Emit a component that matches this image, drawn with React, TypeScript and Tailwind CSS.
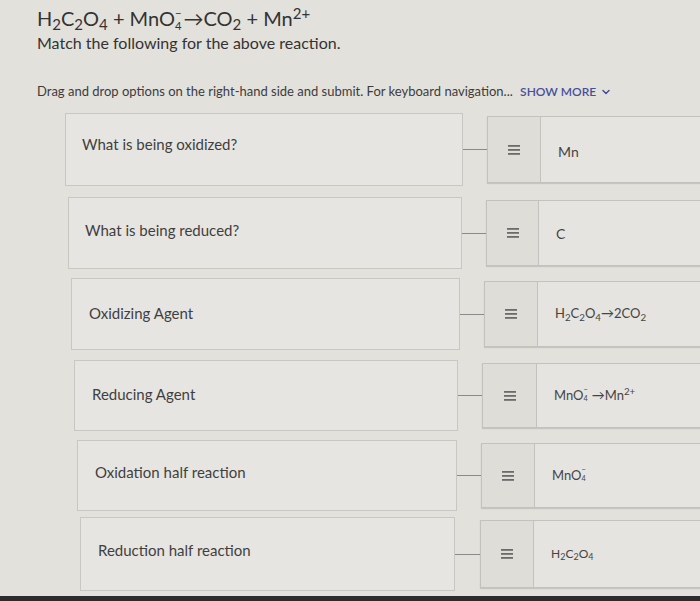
import { ChevronDown } from 'lucide-react';
import type { ReactNode } from 'react';

// sub and sup stacked on one another, as in MnO4⁻
function Stack({ sup, sub }: { sup: string; sub: string }) {
  return (
    <span className="inline-flex flex-col items-start align-middle text-[0.56em] leading-[1.22] -mt-[3px]">
      <span>{sup}</span>
      <span>{sub}</span>
    </span>
  );
}

type Row = {
  prompt: string;
  answer: ReactNode;
  rowClass: string;
  boxClass: string;
  lineClass: string;
  handleClass: string;
};

const rows: Row[] = [
  {
    prompt: 'What is being oxidized?',
    answer: <span className="text-[14px] mt-[4px]">Mn</span>,
    rowClass: 'pl-[65px] h-[73px]',
    boxClass: 'w-[398px] pt-[19px] pl-[16px]',
    lineClass: 'w-[24px]',
    handleClass: 'w-[53px]',
  },
  {
    prompt: 'What is being reduced?',
    answer: <span className="text-[14px]">C</span>,
    rowClass: 'pl-[68px] h-[72px] mt-[11px]',
    boxClass: 'w-[394px] pt-[21px] pl-[16px]',
    lineClass: 'w-[24px]',
    handleClass: 'w-[52px]',
  },
  {
    prompt: 'Oxidizing Agent',
    answer: (
      <span className="text-[13px]">
        H<sub>2</sub>C<sub>2</sub>O<sub>4</sub>→2CO<sub>2</sub>
      </span>
    ),
    rowClass: 'pl-[71px] h-[72px] mt-[9px]',
    boxClass: 'w-[389px] pt-[23px] pl-[17px]',
    lineClass: 'w-[24px]',
    handleClass: 'w-[53px]',
  },
  {
    prompt: 'Reducing Agent',
    answer: (
      <span className="text-[13px]">
        MnO
        <Stack sup="−" sub="4" />
        <span className="ml-[4px]">→Mn</span>
        <sup>2+</sup>
      </span>
    ),
    rowClass: 'pl-[74px] h-[71px] mt-[10px]',
    boxClass: 'w-[384px] pt-[22px] pl-[17px]',
    lineClass: 'w-[24px]',
    handleClass: 'w-[54px]',
  },
  {
    prompt: 'Oxidation half reaction',
    answer: (
      <span className="text-[13px]">
        MnO
        <Stack sup="−" sub="4" />
      </span>
    ),
    rowClass: 'pl-[77px] h-[71px] mt-[9px]',
    boxClass: 'w-[380px] pt-[20px] pl-[17px]',
    lineClass: 'w-[24px]',
    handleClass: 'w-[53px]',
  },
  {
    prompt: 'Reduction half reaction',
    answer: (
      <span className="text-[12px]">
        H<sub>2</sub>C<sub>2</sub>O<sub>4</sub>
      </span>
    ),
    rowClass: 'pl-[80px] h-[74px] mt-[6px]',
    boxClass: 'w-[375px] pt-[21px] pl-[17px]',
    lineClass: 'w-[25px]',
    handleClass: 'w-[53px]',
  },
];

function Handle() {
  return (
    <svg width="14" height="12" viewBox="0 0 14 12">
      <rect x="1" y="1" width="12" height="1.8" fill="#6b6b6b" />
      <rect x="1" y="5" width="12" height="1.8" fill="#6b6b6b" />
      <rect x="1" y="9" width="12" height="1.8" fill="#6b6b6b" />
    </svg>
  );
}

export default function App() {
  return (
    <div
      className="w-[700px] h-[601px] overflow-hidden bg-[#e3e1dc] text-[#3c3c3c] flex flex-col"
      style={{ fontFamily: 'Lato, "Open Sans", sans-serif' }}
    >
      <div className="pl-[37px] pt-[4px] h-[113px]">
        <p className="text-[20px] leading-[28px] text-[#333]">
          H<sub>2</sub>C<sub>2</sub>O<sub>4</sub> + MnO
          <Stack sup="−" sub="4" />
          <span className="ml-[2px]">→CO</span>
          <sub>2</sub> + Mn<sup>2+</sup>
        </p>
        <p className="text-[16px] leading-[20px] text-[#333]">
          Match the following for the above reaction.
        </p>
        <p className="mt-[29px] text-[13px] leading-[18px] text-[#3c3c3c]">
          Drag and drop options on the right-hand side and submit. For keyboard
          navigation...{' '}
          <span className="text-[#45509c] font-semibold text-[12px] ml-[4px] inline-flex items-center gap-[4px]">
            SHOW MORE
            <ChevronDown className="w-[12px] h-[12px]" strokeWidth={3} />
          </span>
        </p>
      </div>

      <div className="flex flex-col">
        {rows.map((r) => (
          <div key={r.prompt} className={`flex items-stretch ${r.rowClass}`}>
            <div
              className={`border border-[#c9c7c2] bg-[#e7e5e1] text-[15px] text-[#3f3f3f] ${r.boxClass}`}
            >
              {r.prompt}
            </div>
            <div className="flex items-center">
              <div className={`h-px bg-[#8a8a8a] ${r.lineClass}`} />
            </div>
            <div className="flex-1 flex border border-[#c4c2bd] border-r-0 my-[3px] shadow-[0_1px_1px_rgba(0,0,0,0.12)]">
              <div
                className={`flex items-center justify-center bg-[#dfddd8] border-r border-[#c4c2bd] ${r.handleClass}`}
              >
                <Handle />
              </div>
              <div className="flex-1 flex items-center pl-[17px] bg-[#e6e4e0] text-[#444]">
                {r.answer}
              </div>
            </div>
          </div>
        ))}
      </div>
      <div className="flex-1" />
      <div className="h-[5px] bg-[#2c2c2c]" />
    </div>
  );
}
